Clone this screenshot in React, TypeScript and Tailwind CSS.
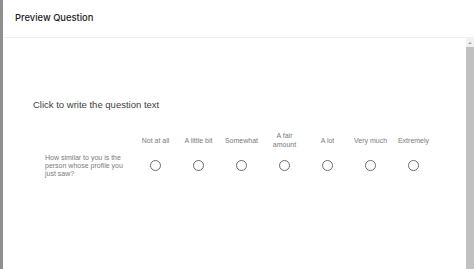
const choices = ["Not at all", "A little bit", "Somewhat", "A fair amount", "A lot", "Very much", "Extremely"];

export default function App() {
  return (
    <div className="flex h-[269px] w-[474px] overflow-hidden bg-white">
      <div className="w-[3px] shrink-0 bg-[#8f8f8f]" />
      <div className="flex min-w-0 flex-1 flex-col">
        {/* header */}
        <div className="flex h-[38px] shrink-0 items-center border-b border-[#eeeeee] pl-[12px]">
          <span className="font-['Inter',sans-serif] text-[9.4px] font-medium text-[#222]">
            Preview Question
          </span>
        </div>
        <div className="flex min-h-0 flex-1">
          <div className="flex-1 pt-[61px] pl-[30px] font-['Liberation_Sans',Arial,sans-serif]">
            <div className="text-[9.5px] leading-[12px] text-[#404040]">
              Click to write the question text
            </div>
            <div className="mt-[16px] ml-[12px] grid grid-cols-[89px_repeat(7,43px)]">
              <div />
              {choices.map((c) => (
                <div key={c} className="flex h-[26px] items-center justify-center px-[4px] text-center text-[7px] leading-[9px] text-[#7a7a7a]">
                  {c}
                </div>
              ))}
              <div className="pr-[10px] pt-[1px] text-[7px] leading-[8px] text-[#7a7a7a]">
                How similar to you is the person whose profile you just saw?
              </div>
              {choices.map((c) => (
                <div key={c} className="flex items-center justify-center">
                  <div className="h-[11px] w-[11px] rounded-full border-[1.3px] border-[#6b6b6b]" />
                </div>
              ))}
            </div>
          </div>
          {/* scrollbar */}
          <div className="flex w-[8px] shrink-0 flex-col bg-[#f1f1f1]">
            <div className="flex h-[9px] items-center justify-center">
              <div className="h-0 w-0 border-x-[2px] border-b-[2px] border-x-transparent border-b-[#a3a3a3]" />
            </div>
            <div className="flex-1 bg-[#c1c1c1]" />
          </div>
        </div>
      </div>
    </div>
  );
}
